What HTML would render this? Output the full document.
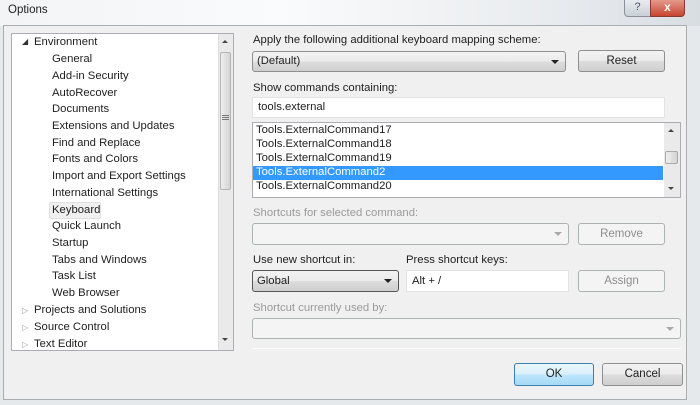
<!DOCTYPE html>
<html><head><meta charset="utf-8"><style>
*{box-sizing:border-box;margin:0;padding:0}
body{width:700px;height:405px;overflow:hidden;background:#e6e9ec;font-family:"Liberation Sans",sans-serif;font-size:11.3px;color:#1e1e1e;position:relative}
.a{position:absolute}
.title{left:0;top:0;width:700px;height:26px;background:linear-gradient(90deg,#f2f4f6,#fafbfc 40%,#e8ebee 80%,#d8dde2)}
.dlg{left:3px;top:25px;width:684px;height:375px;background:#f0f0f0;border:1px solid #a9aeb3}
.box{background:#fff;border:1px solid #abadb3}
.btn{border:1px solid #8e8f8f;border-radius:3px;background:linear-gradient(#f2f2f2,#ebebeb 50%,#dddddd 51%,#cfcfcf);text-align:center;line-height:20px;font-size:11.5px}
.dis{border:1px solid #adb2b5;border-radius:3px;background:#f4f4f4;color:#8d8d8d;text-align:center;line-height:20px;font-size:11.5px}
.dd{border:1px solid #8e8f8f;border-radius:3px;background:linear-gradient(#f2f2f2,#ebebeb 50%,#dddddd 51%,#cfcfcf);padding-left:4px;line-height:19px;font-size:11.3px}
.arr{position:absolute;right:6px;top:8px;width:0;height:0;border-left:4px solid transparent;border-right:4px solid transparent;border-top:4px solid #222}
.lbl{font-size:11.3px}
.gl{color:#9a9a9a}
.t div{position:absolute;white-space:nowrap;font-size:11.3px}
</style></head><body>
<div class="a title"></div>
<div class="a" style="left:8px;top:4px;font-size:11.5px">Options</div>
<div class="a" style="left:624px;top:0;width:27px;height:17px;border:1px solid #8a9099;border-top:none;border-radius:0 0 0 4px;background:linear-gradient(#e8ecf0,#c9d0d8);text-align:center;color:#4a5563;font-size:11px;line-height:15px">?</div>
<div class="a" style="left:650px;top:0;width:35px;height:17px;border:1px solid #8a3a30;border-top:none;border-radius:0 0 4px 0;background:linear-gradient(#e59a8c,#c7452f);text-align:center;color:#fff;font-weight:bold;font-size:12px;line-height:15px">x</div>
<div class="a dlg"></div>

<div class="a box" style="left:11px;top:33px;width:223px;height:318px"></div>
<div class="a" style="left:218px;top:34px;width:15px;height:316px;background:#eaeaea;border-left:1px solid #ddd"></div>
<div class="a" style="left:220px;top:52px;width:11px;height:138px;background:linear-gradient(90deg,#eee,#d4d4d4);border:1px solid #b5b5b5;border-radius:2px"></div>
<div class="a" style="left:222px;top:115px;width:7px;height:1px;background:#777;box-shadow:0 2px #777,0 4px #777"></div>
<div class="a" style="left:222px;top:40px;border-left:3px solid transparent;border-right:3px solid transparent;border-bottom:3px solid #444"></div>
<div class="a" style="left:222px;top:338px;border-left:3px solid transparent;border-right:3px solid transparent;border-top:3px solid #444"></div>
<div class="a" style="left:49px;top:202px;width:52px;height:17px;background:#f0f0f0;border:1px solid #e0e0e0;border-radius:2px"></div>
<div class="t">
<div style="left:22px;top:37px;font-size:8px;color:#333">◢</div>
<div style="left:34px;top:36px">Environment</div>
<div style="left:52px;top:53px">General</div>
<div style="left:52px;top:70px">Add-in Security</div>
<div style="left:52px;top:87px">AutoRecover</div>
<div style="left:52px;top:103px">Documents</div>
<div style="left:52px;top:120px">Extensions and Updates</div>
<div style="left:52px;top:137px">Find and Replace</div>
<div style="left:52px;top:153px">Fonts and Colors</div>
<div style="left:52px;top:170px">Import and Export Settings</div>
<div style="left:52px;top:187px">International Settings</div>
<div style="left:52px;top:204px">Keyboard</div>
<div style="left:52px;top:220px">Quick Launch</div>
<div style="left:52px;top:237px">Startup</div>
<div style="left:52px;top:254px">Tabs and Windows</div>
<div style="left:52px;top:270px">Task List</div>
<div style="left:52px;top:287px">Web Browser</div>
<div style="left:22px;top:306px;font-size:8px;color:#999">▷</div>
<div style="left:34px;top:304px">Projects and Solutions</div>
<div style="left:22px;top:323px;font-size:8px;color:#999">▷</div>
<div style="left:34px;top:321px">Source Control</div>
<div style="left:22px;top:340px;font-size:8px;color:#999">▷</div>
<div style="left:34px;top:338px">Text Editor</div>
</div>

<div class="a lbl" style="left:253px;top:34px">Apply the following additional keyboard mapping scheme:</div>
<div class="a dd" style="left:252px;top:51px;width:314px;height:21px">(Default)<span class="arr"></span></div>
<div class="a btn" style="left:578px;top:50px;width:87px;height:22px">Reset</div>
<div class="a lbl" style="left:253px;top:82px">Show commands containing:</div>
<div class="a box" style="left:252px;top:97px;width:413px;height:21px;border-color:#e3e3e3;padding-left:5px;line-height:19px;font-size:11.3px">tools.external</div>
<div class="a box" style="left:252px;top:122px;width:429px;height:76px"></div>
<div class="a" style="left:664px;top:123px;width:16px;height:74px;background:#eaeaea"></div>
<div class="a" style="left:665px;top:151px;width:13px;height:13px;background:linear-gradient(90deg,#eee,#d4d4d4);border:1px solid #aaa;border-radius:2px"></div>
<div class="a" style="left:668px;top:129px;border-left:3px solid transparent;border-right:3px solid transparent;border-bottom:3px solid #444"></div>
<div class="a" style="left:668px;top:187px;border-left:3px solid transparent;border-right:3px solid transparent;border-top:3px solid #444"></div>
<div class="a" style="left:253px;top:166px;width:410px;height:14px;background:#3399ff"></div>
<div class="t">
<div style="left:256px;top:124px">Tools.ExternalCommand17</div>
<div style="left:256px;top:138px">Tools.ExternalCommand18</div>
<div style="left:256px;top:152px">Tools.ExternalCommand19</div>
<div style="left:256px;top:166px;color:#fff">Tools.ExternalCommand2</div>
<div style="left:256px;top:180px">Tools.ExternalCommand20</div>
</div>

<div class="a lbl gl" style="left:253px;top:207px">Shortcuts for selected command:</div>
<div class="a dis" style="left:252px;top:223px;width:317px;height:22px"><span class="arr" style="border-top-color:#aaa"></span></div>
<div class="a dis" style="left:578px;top:223px;width:87px;height:22px">Remove</div>
<div class="a lbl" style="left:253px;top:254px">Use new shortcut in:</div>
<div class="a lbl" style="left:406px;top:254px">Press shortcut keys:</div>
<div class="a dd" style="left:252px;top:270px;width:147px;height:22px;border-color:#555;line-height:20px">Global<span class="arr"></span></div>
<div class="a box" style="left:406px;top:270px;width:163px;height:22px;border-color:#e3e3e3;padding-left:5px;line-height:20px;font-size:11.3px">Alt + /</div>
<div class="a dis" style="left:578px;top:270px;width:87px;height:22px">Assign</div>
<div class="a lbl gl" style="left:253px;top:302px">Shortcut currently used by:</div>
<div class="a dis" style="left:252px;top:318px;width:429px;height:21px"><span class="arr" style="border-top-color:#aaa"></span></div>
<div class="a" style="left:252px;top:348px;width:429px;height:1px;background:#a0a0a0;border-bottom:1px solid #fff"></div>
<div class="a btn" style="left:514px;top:363px;width:80px;height:23px;border-color:#3c7fb1;background:linear-gradient(#eaf6fd,#d9f0fc 50%,#bee6fd 51%,#a7d9f5);line-height:21px">OK</div>
<div class="a btn" style="left:602px;top:363px;width:81px;height:23px;line-height:21px">Cancel</div>
</body></html>
